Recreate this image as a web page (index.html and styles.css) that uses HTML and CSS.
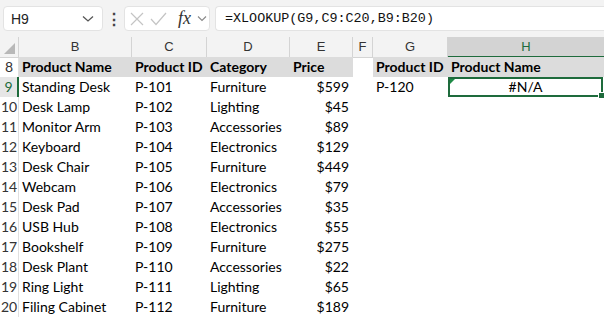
FILE: index.html
```html
<!DOCTYPE html>
<html lang="en">
<head>
  <meta charset="UTF-8" />
  <title>XLOOKUP</title>
  <link rel="stylesheet" href="styles.css">
</head>
<body>

<!-- Formula bar -->
<div class="formula-bar">
  <div class="name-box">
    <span>H9</span>
    <svg width="12" height="8" viewBox="0 0 12 8"><path d="M1 1.5 L6 6 L11 1.5" fill="none" stroke="#555" stroke-width="1.3"/></svg>
  </div>
  <div class="dots">⋮</div>
  <div class="fn-box">
    <svg width="14" height="14" viewBox="0 0 14 14"><path d="M1 1 L13 13 M13 1 L1 13" stroke="#c4c4c4" stroke-width="1.2"/></svg>
    <svg width="17" height="14" viewBox="0 0 17 14"><path d="M1 7 L6 12.5 L16 1" fill="none" stroke="#c4c4c4" stroke-width="1.2"/></svg>
    <span class="fx">fx</span>
    <svg width="10" height="7" viewBox="0 0 10 7"><path d="M1 1.5 L5 5.5 L9 1.5" fill="none" stroke="#888" stroke-width="1.1"/></svg>
  </div>
  <div class="formula">=XLOOKUP(G9,C9:C20,B9:B20)</div>
</div>

<!-- Sheet -->
<div class="sheet">
  <div class="col-head corner"><span class="tri"></span></div>
  <div class="col-head">B</div>
  <div class="col-head">C</div>
  <div class="col-head">D</div>
  <div class="col-head">E</div>
  <div class="col-head">F</div>
  <div class="col-head">G</div>
  <div class="col-head active">H</div>

  <div class="row-head">8</div>
  <div class="cell th">Product Name</div>
  <div class="cell th">Product ID</div>
  <div class="cell th">Category</div>
  <div class="cell th">Price</div>
  <div class="cell"></div>
  <div class="cell th">Product ID</div>
  <div class="cell th">Product Name</div>

  <div class="row-head active">9</div>
  <div class="cell">Standing Desk</div>
  <div class="cell">P-101</div>
  <div class="cell">Furniture</div>
  <div class="cell num">$599</div>
  <div class="cell"></div>
  <div class="cell">P-120</div>
  <div class="cell selected">#N/A<span class="err"></span><span class="handle"></span></div>
</div>

<div class="sheet" id="rows"></div>

<script>
  // Product rows 10 - 20
  const products = [
    ["Desk Lamp", "P-102", "Lighting", "$45"],
    ["Monitor Arm", "P-103", "Accessories", "$89"],
    ["Keyboard", "P-104", "Electronics", "$129"],
    ["Desk Chair", "P-105", "Furniture", "$449"],
    ["Webcam", "P-106", "Electronics", "$79"],
    ["Desk Pad", "P-107", "Accessories", "$35"],
    ["USB Hub", "P-108", "Electronics", "$55"],
    ["Bookshelf", "P-109", "Furniture", "$275"],
    ["Desk Plant", "P-110", "Accessories", "$22"],
    ["Ring Light", "P-111", "Lighting", "$65"],
    ["Filing Cabinet", "P-112", "Furniture", "$189"]
  ];

  const rows = document.getElementById("rows");
  products.forEach((p, i) => {
    rows.innerHTML +=
      `<div class="row-head">${i + 10}</div>` +
      `<div class="cell">${p[0]}</div>` +
      `<div class="cell">${p[1]}</div>` +
      `<div class="cell">${p[2]}</div>` +
      `<div class="cell num">${p[3]}</div>` +
      `<div class="cell"></div><div class="cell"></div><div class="cell"></div>`;
  });
</script>

</body>
</html>
```

FILE: styles.css
```css
body {
  margin: 0;
  font-family: Lato, sans-serif;
  background: #fff;
  color: #000;
  overflow: hidden;
}
.formula-bar {
  height: 37px;
  background: #f3f3f3;
  display: flex;
  align-items: center;
  padding: 0 0 0 3px;
  box-sizing: border-box;
}
.name-box, .fn-box, .formula {
  height: 25px;
  background: #fff;
  border: 1px solid #e3e3e3;
  border-radius: 4px;
  box-sizing: border-box;
  display: flex;
  align-items: center;
}
.name-box {
  width: 100px;
  justify-content: space-between;
  padding: 0 8px 0 7px;
  font-family: "Liberation Sans", sans-serif;
  font-size: 14px;
  color: #222;
}
.dots {
  width: 21px;
  text-align: center;
  font-size: 16px;
  font-weight: bold;
  color: #444;
}
.fn-box {
  width: 86px;
  gap: 6px;
  padding-left: 5px;
}
.fx {
  font-family: "Liberation Serif", serif;
  font-style: italic;
  font-size: 18px;
  color: #333;
  margin-left: 5px;
}
.formula {
  flex: 1;
  margin-left: 5px;
  padding-left: 9px;
  border-right: none;
  border-radius: 4px 0 0 4px;
  font-family: "Liberation Mono", monospace;
  font-size: 13.4px;
  color: #111;
}
.sheet {
  display: grid;
  grid-template-columns: 19px 113px 75px 83px 63px 20px 75px 156px;
  grid-auto-rows: 20px;
}
.col-head {
  height: 21px;
  background: #f3f3f3;
  border-right: 1px solid #d4d4d4;
  border-bottom: 1px solid #d4d4d4;
  box-sizing: border-box;
  text-align: center;
  font-family: "Liberation Sans", sans-serif;
  font-size: 13px;
  line-height: 20px;
  color: #333;
}
.col-head.active {
  background: #d3d3d3;
  border-bottom: 2px solid #1e6b3c;
  color: #1e6b3c;
  border-right: none;
}
.corner {
  position: relative;
}
.tri {
  position: absolute;
  right: 3px;
  bottom: 3px;
  width: 0;
  height: 0;
  border-left: 11px solid transparent;
  border-bottom: 11px solid #b8b8b8;
}
.row-head {
  font-size: 14px;
  line-height: 20px;
  text-align: center;
  color: #333;
  border-right: 1px solid #e0e0e0;
}
.row-head.active {
  background: #e6e6e6;
  border-right: 2px solid #1e6b3c;
  color: #1e6b3c;
}
.cell {
  font-size: 14px;
  line-height: 20px;
  padding: 0 3px;
  white-space: nowrap;
  overflow: hidden;
}
.cell.th {
  background: #dcdcdc;
  font-weight: bold;
}
.cell.num {
  text-align: right;
  padding-right: 4px;
}
.cell.selected {
  position: relative;
  overflow: visible;
  text-align: center;
  border: 2px solid #1e6b3c;
  margin-right: 1px;
  line-height: 16px;
}
.err {
  position: absolute;
  left: 0;
  top: 0;
  border-top: 5px solid #1e8a46;
  border-right: 5px solid transparent;
}
.handle {
  position: absolute;
  right: -4px;
  bottom: -4px;
  width: 5px;
  height: 5px;
  background: #1e6b3c;
  border: 1px solid #fff;
}
```
